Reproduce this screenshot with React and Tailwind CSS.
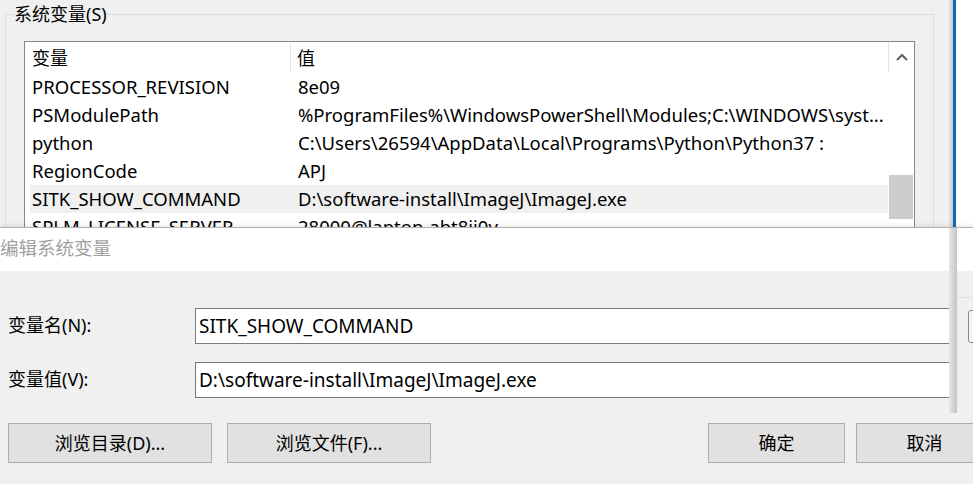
import React from 'react';

const font = "font-['Noto_Sans','Noto_Sans_CJK_SC',sans-serif]";

const vars = [
  { name: 'PROCESSOR_REVISION', value: '8e09' },
  { name: 'PSModulePath', value: '%ProgramFiles%\\WindowsPowerShell\\Modules;C:\\WINDOWS\\syst...' },
  { name: 'python', value: 'C:\\Users\\26594\\AppData\\Local\\Programs\\Python\\Python37 :' },
  { name: 'RegionCode', value: 'APJ' },
  { name: 'SITK_SHOW_COMMAND', value: 'D:\\software-install\\ImageJ\\ImageJ.exe', selected: true },
  { name: 'SPLM_LICENSE_SERVER', value: '28000@laptop-abt8ij0v' },
];

function VarList() {
  return (
    <div className="mt-[26px] ml-[18px] w-[891px] h-[260px] border border-[#828790] bg-white flex">
      <div className="flex-1 flex flex-col">
        <div className="h-[31px] flex items-center text-[18px] leading-[24px]">
          <div className="w-[266px] pl-[7px] h-[29px] flex items-center border-r border-[#e5e5e5]">变量</div>
          <div className="pl-[6px]">值</div>
        </div>
        {vars.map((v) => (
          <div
            key={v.name}
            className={`ml-[5px] h-[28px] flex items-center text-[18.5px] leading-[24px] whitespace-nowrap overflow-hidden ${v.selected ? 'bg-[#f0f0f0]' : ''}`}
          >
            <div className="w-[268px] shrink-0 pl-[2px]">{v.name}</div>
            <div>{v.value}</div>
          </div>
        ))}
      </div>
      {/* vertical scrollbar */}
      <div className="w-[26px] flex flex-col items-center">
        <div className="h-[30px] w-full flex items-center justify-center border-l border-[#e5e5e5]">
          <svg width="12" height="8" viewBox="0 0 12 8">
            <path d="M1 7 L6 2 L11 7" fill="none" stroke="#606060" strokeWidth="2" />
          </svg>
        </div>
        <div className="mt-[103px] w-[24px] h-[44px] bg-[#cdcdcd]" />
      </div>
    </div>
  );
}

function Button({ children, className }) {
  return (
    <button className={`h-[40px] border border-[#adadad] bg-[#e1e1e1] text-[18px] leading-[24px] text-black shrink-0 ${className}`}>
      {children}
    </button>
  );
}

function EditDialog() {
  return (
    <div className="absolute left-0 top-[227px] w-[1000px] h-[257px] flex flex-col border-t border-[#b0b0b0] shadow-[0_-2px_4px_rgba(0,0,0,0.08)]">
      <div className="h-[43px] bg-white flex items-center pb-[3px] text-[18.5px] text-[#a0a0a0]">编辑系统变量</div>
      <div className="flex-1 bg-[#f0f0f0] flex flex-col pt-[37px]">
        <div className="flex items-center h-[36px]">
          <div className="w-[195px] pl-[8px] pb-[1px] text-[18px]">变量名(N):</div>
          <div className="flex-1 h-full border border-[#7a7a7a] bg-white flex items-center pl-[3px] text-[19px]">SITK_SHOW_COMMAND</div>
        </div>
        <div className="flex items-center h-[36px] mt-[18px]">
          <div className="w-[195px] pl-[8px] pb-[1px] text-[18px]">变量值(V):</div>
          <div className="flex-1 h-full border border-[#7a7a7a] bg-white flex items-center pl-[3px] text-[19px]">D:\software-install\ImageJ\ImageJ.exe</div>
        </div>
        <div className="flex mt-[25px] pl-[8px]">
          <Button className="w-[204px]">浏览目录(D)...</Button>
          <Button className="w-[204px] ml-[15px]">浏览文件(F)...</Button>
          <Button className="w-[137px] ml-[277px]">确定</Button>
          <Button className="w-[137px] ml-[11px]">取消</Button>
        </div>
      </div>
    </div>
  );
}

export default function App() {
  return (
    <div className={`relative w-[973px] h-[484px] overflow-hidden flex text-black ${font}`}>
      {/* window behind: system variables list */}
      <div className="w-[948px] h-full bg-[#f0f0f0] pt-[14px] pl-[5px]">
        <div className="relative w-[929px] h-full border-l border-t border-r border-[#dcdcdc]">
          <div className="absolute -top-[13px] left-[7px] px-[1px] bg-[#f0f0f0] text-[18px] leading-[24px]">系统变量(S)</div>
          <VarList />
        </div>
      </div>
      <div className="w-[5px] h-full bg-gradient-to-r from-[#f0f0f0] to-[#c8c8c8]" />
      <div className="w-[3px] h-full bg-[#0e6cb6]" />
      <div className="flex-1 h-full bg-white" />

      <EditDialog />

      {/* right edge of the dialog and the window peeking out behind it */}
      <div className="absolute left-[949px] top-[228px] w-[8px] h-[185px] bg-gradient-to-r from-[#e6e6e6] to-[#c4c4c4]" />
      <div className="absolute left-[957px] top-[297px] w-[16px] h-[116px] bg-[#f0f0f0] border-t border-[#e0e0e0]">
        <div className="mt-[12px] ml-[11px] w-[10px] h-[33px] border border-[#8a8a8a] rounded-l-[3px] bg-[#f5f5f5]" />
      </div>
    </div>
  );
}
